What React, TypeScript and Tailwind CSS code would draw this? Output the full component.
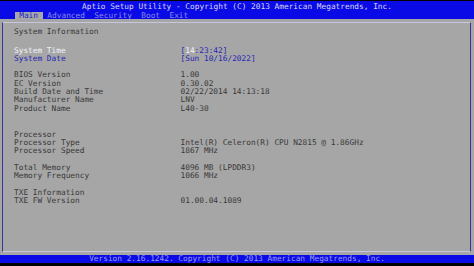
import React from 'react';

type Row = { label: string; value?: React.ReactNode; labelClass?: string };

const rowClass = 'flex h-[8.33px] leading-[8.33px] whitespace-pre';

const Rows = ({ rows, className = '' }: { rows: Row[]; className?: string }) => (
  <div className={className}>
    {rows.map((r) => (
      <div key={r.label} className={rowClass}>
        <span className={`w-[166.5px] ${r.labelClass ?? 'text-[#383838]'}`}>{r.label}</span>
        {r.value !== undefined && <span className="text-[#383838]">{r.value}</span>}
      </div>
    ))}
  </div>
);

const tabs = ['Main', 'Advanced', 'Security', 'Boot', 'Exit'];

const App = () => {
  return (
    <div className="w-[474px] h-[266px] overflow-hidden bg-[#a6a6a6] flex flex-col font-['DejaVu_Sans_Mono','Liberation_Mono',monospace] text-[7.8px]">
      <div className="h-px bg-black" />
      <div className="h-[18px] bg-[#0a0ae6] flex flex-col">
        <div className="h-[11px] flex items-center justify-center text-[#d6d6f6] whitespace-pre">
          Aptio Setup Utility - Copyright (C) 2013 American Megatrends, Inc.
        </div>
        <div className="h-[7px] flex pl-[14.5px] leading-[7px] whitespace-pre">
          {tabs.map((t, i) => (
            <span
              key={t}
              className={i === 0 ? 'bg-[#a8a8a8] text-[#1c1cc8]' : 'text-[#8a8ae8]'}
            >
              {` ${t} `}
            </span>
          ))}
        </div>
      </div>

      <div className="mt-[3px] ml-[2px] w-[469px] h-[230px] border-x border-x-[#3434a0] border-y border-y-[#c6c6dc] pl-[11px] pt-[5px]">
        <Rows rows={[{ label: 'System Information' }]} />
        <div className="mt-[10.2px]">
          <div className={rowClass}>
            <span className="w-[166.5px] text-[#f2f2fa]">System Time</span>
            <span className="text-[#2626b4]">
              [<span className="text-[#f4f4ff]">14</span>:23:42]
            </span>
          </div>
          <div className={rowClass}>
            <span className="w-[166.5px] text-[#2626b4]">System Date</span>
            <span className="text-[#2626b4]">[Sun 10/16/2022]</span>
          </div>
        </div>
        <Rows
          className="mt-[8.3px]"
          rows={[
            { label: 'BIOS Version', value: '1.00' },
            { label: 'EC Version', value: '0.30.02' },
            { label: 'Build Date and Time', value: '02/22/2014 14:13:18' },
            { label: 'Manufacturer Name', value: 'LNV' },
            { label: 'Product Name', value: 'L40-30' },
          ]}
        />
        <Rows
          className="mt-[17.7px]"
          rows={[
            { label: 'Processor' },
            { label: 'Processor Type', value: 'Intel(R) Celeron(R) CPU N2815 @ 1.86GHz' },
            { label: 'Processor Speed', value: '1867 MHz' },
          ]}
        />
        <Rows
          className="mt-[8.3px]"
          rows={[
            { label: 'Total Memory', value: '4096 MB (LPDDR3)' },
            { label: 'Memory Frequency', value: '1066 MHz' },
          ]}
        />
        <Rows
          className="mt-[8.3px]"
          rows={[
            { label: 'TXE Information' },
            { label: 'TXE FW Version', value: '01.00.04.1089' },
          ]}
        />
      </div>

      <div className="mt-[3px] h-[8px] bg-[#0a0ae6] flex items-center justify-center text-[#9c9cf4] whitespace-pre leading-[8px]">
        Version 2.16.1242. Copyright (C) 2013 American Megatrends, Inc.
      </div>
      <div className="flex-1 bg-black" />
    </div>
  );
};

export default App;
